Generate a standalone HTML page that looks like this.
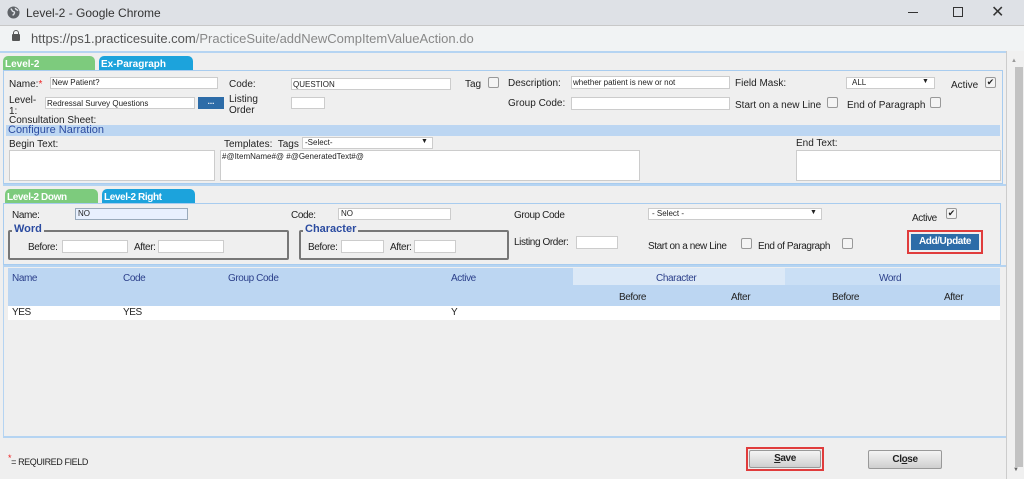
<!DOCTYPE html>
<html><head><style>
*{margin:0;padding:0;box-sizing:border-box}
body{width:1024px;height:479px;overflow:hidden;background:#efefef;font-family:"Liberation Sans",Arial,sans-serif;font-size:10px;color:#222;position:relative}
.a{position:absolute;white-space:nowrap}
.in{position:absolute;background:#fff;border:1px solid #ccc}
.cb{position:absolute;width:11px;height:11px;border:1px solid #999;border-radius:2px;background:#f4f4f4}
.nar{font-family:"Liberation Sans Narrow","Liberation Sans",sans-serif;letter-spacing:-0.4px}
</style></head><body>
<div class="a" style="left:0;top:0;width:1024px;height:25px;background:#dee1e6"></div>
<svg class="a" style="left:7px;top:6px" width="13" height="13" viewBox="0 0 14 14"><circle cx="7" cy="7" r="6.5" fill="#5f6368"/><path d="M4 3c2 1 1 3 3 3s1 3-1 4M9 2c0 2 2 2 3 3" stroke="#dee1e6" stroke-width="1.5" fill="none"/></svg>
<div class="a" style="left:26px;top:6px;font-size:12px;color:#333">Level-2 - Google Chrome</div>
<div class="a" style="left:908px;top:12px;width:10px;height:1px;background:#333"></div>
<div class="a" style="left:953px;top:7px;width:10px;height:10px;border:1px solid #333"></div>
<div class="a" style="left:991px;top:2px;font-size:16px;color:#333">✕</div>
<div class="a" style="left:0;top:25px;width:1024px;height:26px;background:#f1f3f4;border-top:1px solid #c8c8c8"></div>
<div class="a" style="left:12px;top:34px;width:8px;height:7px;background:#555;border-radius:1px"></div>
<div class="a" style="left:13px;top:30px;width:6px;height:6px;border:1.5px solid #555;border-radius:3px 3px 0 0"></div>
<div class="a" style="left:31px;top:31px;font-size:13px;color:#555">https://ps1.practicesuite.com<span style="color:#888">/PracticeSuite/addNewCompItemValueAction.do</span></div>
<div class="a" style="left:0;top:51px;width:1006px;height:2px;background:#b5d4f2"></div>
<!-- scrollbar -->
<div class="a" style="left:1006px;top:51px;width:18px;height:428px;background:#f0f0f0;border-left:1px solid #ccc"></div>
<div class="a" style="left:1011px;top:58px;font-size:6px;color:#999">▲</div>
<div class="a" style="left:1015px;top:67px;width:8px;height:400px;background:#c2c2c2"></div>
<div class="a" style="left:1013px;top:467px;font-size:6px;color:#666">▼</div>
<!-- top tabs -->
<div class="a" style="left:3px;top:56px;width:92px;height:15px;background:#7dcb7d;border-radius:5px 5px 0 0;color:#fff;font-weight:bold;font-size:10px;padding:3px 0 0 2px">Level-2</div>
<div class="a" style="left:99px;top:56px;width:94px;height:15px;background:#1ca3dc;border-radius:5px 5px 0 0;color:#fff;font-weight:bold;font-size:10px;padding:3px 0 0 2px">Ex-Paragraph</div>
<div class="a" style="left:3px;top:70px;width:1000px;height:114px;border:1px solid #a8ccef"></div>
<div class="a" style="left:9px;top:79px">Name:<span style="color:#e22">*</span></div>
<div class="in" style="left:50px;top:77px;width:168px;height:12px"></div><div class="a" style="left:52px;top:78px;font-size:8px">New Patient?</div>
<div class="a" style="left:229px;top:79px">Code:</div>
<div class="in" style="left:291px;top:78px;width:160px;height:12px"></div><div class="a" style="left:293px;top:80px;font-size:8px">QUESTION</div>
<div class="a" style="left:465px;top:79px">Tag</div><div class="cb" style="left:488px;top:77px"></div>
<div class="a" style="left:508px;top:78px">Description:</div>
<div class="in" style="left:571px;top:76px;width:159px;height:13px"></div><div class="a" style="left:573px;top:78px;font-size:8px">whether patient is new or not</div>
<div class="a" style="left:735px;top:78px">Field Mask:</div>
<div class="in" style="left:846px;top:77px;width:89px;height:12px"></div><div class="a" style="left:852px;top:78px;font-size:8px">ALL</div><div class="a" style="left:922px;top:78px;font-size:7px">▼</div>
<div class="a" style="left:951px;top:80px">Active</div><div class="cb" style="left:985px;top:77px;font-size:9px;line-height:9px;text-align:center">✔</div>
<div class="a" style="left:9px;top:95px;line-height:11px">Level-<br>1:</div>
<div class="in" style="left:45px;top:97px;width:150px;height:12px"></div><div class="a" style="left:47px;top:99px;font-size:8px">Redressal Survey Questions</div>
<div class="a" style="left:198px;top:97px;width:26px;height:12px;background:#2d6ca8;color:#fff;font-weight:bold;text-align:center;font-size:8px">...</div>
<div class="a" style="left:229px;top:94px;line-height:11px">Listing<br>Order</div>
<div class="in" style="left:291px;top:97px;width:34px;height:12px"></div>
<div class="a" style="left:508px;top:98px">Group Code:</div>
<div class="in" style="left:571px;top:97px;width:159px;height:13px"></div>
<div class="a" style="left:735px;top:100px">Start on a new Line</div><div class="cb" style="left:827px;top:97px"></div>
<div class="a" style="left:847px;top:100px">End of Paragraph</div><div class="cb" style="left:930px;top:97px"></div>
<div class="a" style="left:9px;top:115px">Consultation Sheet:</div>
<div class="a" style="left:6px;top:125px;width:994px;height:11px;background:#bcd6f2"></div>
<div class="a" style="left:8px;top:124px;color:#2b4ba0;font-size:11px">Configure Narration</div>
<div class="a" style="left:9px;top:139px">Begin Text:</div>
<div class="a" style="left:224px;top:139px">Templates:&nbsp; Tags</div>
<div class="in" style="left:302px;top:137px;width:131px;height:12px"></div><div class="a" style="left:305px;top:138px;font-size:8px">-Select-</div><div class="a" style="left:421px;top:138px;font-size:7px">▼</div>
<div class="a" style="left:796px;top:138px">End Text:</div>
<div class="in" style="left:9px;top:150px;width:206px;height:31px"></div>
<div class="in" style="left:220px;top:150px;width:420px;height:31px"></div><div class="a" style="left:222px;top:152px;font-size:8px">#@ItemName#@ #@GeneratedText#@</div>
<div class="in" style="left:796px;top:150px;width:205px;height:31px"></div>
<!-- second tabs -->
<div class="a" style="left:3px;top:184px;width:1003px;height:2px;background:#b5d4f2"></div>
<div class="a nar" style="left:5px;top:189px;width:93px;height:15px;background:#7dcb7d;border-radius:5px 5px 0 0;color:#fff;font-weight:bold;padding:3px 0 0 2px">Level-2 Down</div>
<div class="a nar" style="left:102px;top:189px;width:93px;height:15px;background:#1ca3dc;border-radius:5px 5px 0 0;color:#fff;font-weight:bold;padding:3px 0 0 2px">Level-2 Right</div>
<div class="a" style="left:3px;top:203px;width:998px;height:62px;border:1px solid #a8ccef"></div>
<div class="a nar" style="left:12px;top:210px">Name:</div>
<div class="in" style="left:75px;top:208px;width:113px;height:12px;background:#e8f0fe;border-color:#9ab"></div><div class="a" style="left:78px;top:209px;font-size:8px">NO</div>
<div class="a nar" style="left:291px;top:210px">Code:</div>
<div class="in" style="left:338px;top:208px;width:113px;height:12px"></div><div class="a" style="left:341px;top:209px;font-size:8px">NO</div>
<div class="a nar" style="left:514px;top:210px">Group Code</div>
<div class="in" style="left:648px;top:208px;width:174px;height:12px"></div><div class="a" style="left:652px;top:209px;font-size:8px">- Select -</div><div class="a" style="left:810px;top:209px;font-size:7px">▼</div>
<div class="a nar" style="left:912px;top:213px">Active</div><div class="cb" style="left:946px;top:208px;font-size:9px;line-height:9px;text-align:center">✔</div>
<div class="a" style="left:8px;top:230px;width:281px;height:30px;border:2px solid #777;border-radius:2px"></div>
<div class="a" style="left:12px;top:223px;background:#efefef;color:#2b4ba0;font-weight:bold;font-size:11px;padding:0 2px">Word</div>
<div class="a nar" style="left:28px;top:242px">Before:</div><div class="in" style="left:62px;top:240px;width:66px;height:13px"></div>
<div class="a nar" style="left:134px;top:242px">After:</div><div class="in" style="left:158px;top:240px;width:66px;height:13px"></div>
<div class="a" style="left:299px;top:230px;width:210px;height:30px;border:2px solid #777;border-radius:2px"></div>
<div class="a" style="left:303px;top:223px;background:#efefef;color:#2b4ba0;font-weight:bold;font-size:11px;padding:0 2px">Character</div>
<div class="a nar" style="left:308px;top:242px">Before:</div><div class="in" style="left:341px;top:240px;width:43px;height:13px"></div>
<div class="a nar" style="left:390px;top:242px">After:</div><div class="in" style="left:414px;top:240px;width:42px;height:13px"></div>
<div class="a nar" style="left:514px;top:237px">Listing Order:</div><div class="in" style="left:576px;top:236px;width:42px;height:13px"></div>
<div class="a nar" style="left:648px;top:241px">Start on a new Line</div><div class="cb" style="left:741px;top:238px"></div>
<div class="a nar" style="left:758px;top:241px">End of Paragraph</div><div class="cb" style="left:842px;top:238px"></div>
<div class="a" style="left:907px;top:230px;width:76px;height:24px;border:2px solid #e03c3c"></div>
<div class="a nar" style="left:911px;top:234px;width:68px;height:16px;background:#2d6ca8;color:#fff;font-weight:bold;text-align:center;line-height:16px">Add/Update</div>
<!-- grid -->
<div class="a" style="left:3px;top:265px;width:1003px;height:2px;background:#b5d4f2"></div>
<div class="a" style="left:8px;top:268px;width:992px;height:38px;background:#bcd6f2"></div>
<div class="a" style="left:573px;top:268px;width:212px;height:17px;background:#dce9f7"></div>
<div class="a" style="left:785px;top:268px;width:215px;height:17px;background:#cadff5"></div>
<div class="a nar" style="left:8px;top:306px;width:992px;height:14px;background:#fff"></div>
<div class="a nar" style="left:12px;top:273px;color:#2b3f8a">Name</div>
<div class="a nar" style="left:123px;top:273px;color:#2b3f8a">Code</div>
<div class="a nar" style="left:228px;top:273px;color:#2b3f8a">Group Code</div>
<div class="a nar" style="left:451px;top:273px;color:#2b3f8a">Active</div>
<div class="a nar" style="left:656px;top:273px;color:#2b3f8a">Character</div>
<div class="a nar" style="left:879px;top:273px;color:#2b3f8a">Word</div>
<div class="a nar" style="left:619px;top:292px">Before</div>
<div class="a nar" style="left:731px;top:292px">After</div>
<div class="a nar" style="left:832px;top:292px">Before</div>
<div class="a nar" style="left:944px;top:292px">After</div>
<div class="a nar" style="left:12px;top:307px">YES</div>
<div class="a nar" style="left:123px;top:307px">YES</div>
<div class="a nar" style="left:451px;top:307px">Y</div>
<div class="a" style="left:3px;top:267px;width:1px;height:170px;background:#b5d4f2"></div>
<div class="a" style="left:3px;top:436px;width:1003px;height:2px;background:#b5d4f2"></div>
<div class="a nar" style="left:8px;top:457px;font-size:9px"><span style="color:#e22;position:relative;top:-4px">*</span>= REQUIRED FIELD</div>
<div class="a" style="left:746px;top:447px;width:78px;height:24px;border:2px solid #e03c3c"></div>
<div class="a nar" style="left:749px;top:450px;width:72px;height:18px;background:linear-gradient(#f4f4f4,#cfcfcf);border:1px solid #999;border-radius:2px;text-align:center;line-height:16px;font-weight:bold"><u>S</u>ave</div>
<div class="a nar" style="left:868px;top:450px;width:74px;height:19px;background:linear-gradient(#f4f4f4,#cfcfcf);border:1px solid #999;border-radius:2px;text-align:center;line-height:17px;font-weight:bold">Cl<u>o</u>se</div>
</body></html>
